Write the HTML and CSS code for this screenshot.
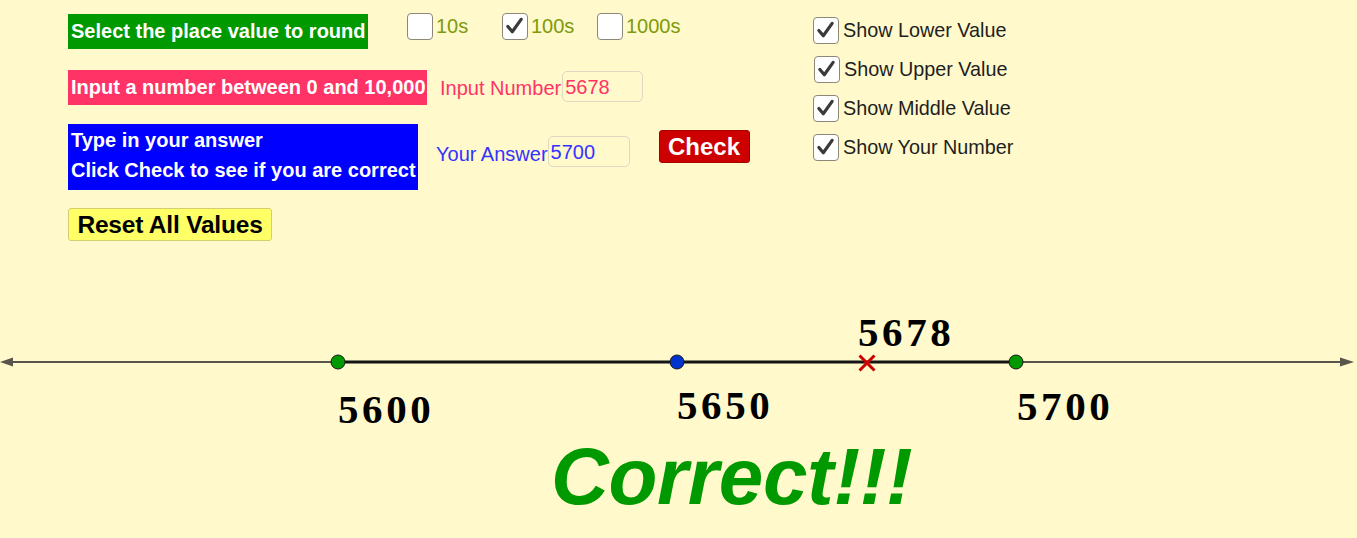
FILE: index.html
```html
<!DOCTYPE html>
<html>
<head>
<meta charset="utf-8">
<link rel="stylesheet" href="styles.css">
</head>
<body>
<div class="app">
  <div class="controls">
    <div class="left">
      <div class="row row1">
        <div class="tag tag-green">Select the place value to round</div>
        <div class="places">
          <div class="place"><span class="cb"></span><span class="place-label">10s</span></div>
          <div class="place"><span class="cb"><svg viewBox="0 0 26 26"><path d="M5.5 13.5 L10.5 19.5 L20.5 5.5" /></svg></span><span class="place-label">100s</span></div>
          <div class="place"><span class="cb"></span><span class="place-label">1000s</span></div>
        </div>
      </div>
      <div class="row row2">
        <div class="tag tag-pink">Input a number between 0 and 10,000</div>
        <span class="field-label pink">Input Number</span>
        <div class="field pink field-number">5678</div>
      </div>
      <div class="row row3">
        <div class="tag tag-blue">Type in your answer<br>Click Check to see if you are correct</div>
        <span class="field-label blue">Your Answer</span>
        <div class="field blue field-answer">5700</div>
        <button class="btn btn-check">Check</button>
      </div>
      <div class="row row4">
        <button class="btn btn-reset">Reset All Values</button>
      </div>
    </div>
    <div class="right">
      <div class="show"><span class="cb"><svg viewBox="0 0 26 26"><path d="M5.5 13.5 L10.5 19.5 L20.5 5.5" /></svg></span><span class="show-label">Show Lower Value</span></div>
      <div class="show shift"><span class="cb"><svg viewBox="0 0 26 26"><path d="M5.5 13.5 L10.5 19.5 L20.5 5.5" /></svg></span><span class="show-label">Show Upper Value</span></div>
      <div class="show"><span class="cb"><svg viewBox="0 0 26 26"><path d="M5.5 13.5 L10.5 19.5 L20.5 5.5" /></svg></span><span class="show-label">Show Middle Value</span></div>
      <div class="show"><span class="cb"><svg viewBox="0 0 26 26"><path d="M5.5 13.5 L10.5 19.5 L20.5 5.5" /></svg></span><span class="show-label">Show Your Number</span></div>
    </div>
  </div>
  <svg class="numline" viewBox="0 0 1357 147" width="1357" height="147">
    <line class="axis" x1="6" y1="72" x2="1346" y2="72" />
    <polygon class="arrow" points="0,72 13,67.5 13,76.5" />
    <polygon class="arrow" points="1354,72 1340,67.5 1340,76.5" />
    <line class="seg" x1="338" y1="72" x2="1016" y2="72" />
    <circle class="pt-green" cx="338" cy="72" r="7" />
    <circle class="pt-blue" cx="677" cy="72" r="7" />
    <circle class="pt-green" cx="1016" cy="72" r="7" />
    <path class="cross" d="M859.5 65.5 L874.5 80.5 M874.5 65.5 L859.5 80.5" />
    <text class="num" x="338" y="133">5600</text>
    <text class="num" x="677" y="129">5650</text>
    <text class="num" x="1017" y="130">5700</text>
    <text class="num" x="858" y="56">5678</text>
  </svg>
  <div class="result">Correct!!!</div>
</div>
</body>
</html>
```

FILE: styles.css
```css
html, body {
  margin: 0;
  padding: 0;
  background: #fffacd;
}
.app {
  width: 1357px;
  height: 538px;
  overflow: hidden;
  background: #fff9cc;
  font-family: "Liberation Sans", Arial, sans-serif;
}
.controls {
  display: flex;
  height: 290px;
  box-sizing: border-box;
  padding: 14px 0 0 68px;
}
.left {
  width: 745px;
  display: flex;
  flex-direction: column;
}
.row {
  display: flex;
  align-items: flex-start;
}
.row2 { margin-top: 21px; }
.row3 { margin-top: 19px; }
.row4 { margin-top: 18px; }

.tag {
  color: #fff;
  font-weight: bold;
  font-size: 20px;
  box-sizing: border-box;
  padding: 0 3px;
  white-space: nowrap;
}
.tag-green {
  background: #009900;
  width: 300px;
  height: 35px;
  line-height: 35px;
}
.tag-pink {
  background: #ff3366;
  width: 359px;
  height: 35px;
  line-height: 35px;
}
.tag-blue {
  background: #0000ff;
  width: 350px;
  height: 66px;
  line-height: 30px;
  padding-top: 1px;
}

.places {
  display: flex;
  margin-left: 39px;
  margin-top: -1px;
}
.place {
  display: flex;
  align-items: center;
  width: 95px;
}
.place:last-child { width: auto; }
.place-label {
  color: #7d9b0a;
  font-size: 20px;
  margin-left: 3px;
}

.cb {
  display: inline-block;
  width: 26px;
  height: 27px;
  box-sizing: border-box;
  border: 1.5px solid #8c8878;
  border-radius: 4px;
  background: #fff;
  flex: none;
}
.cb svg {
  display: block;
  width: 23px;
  height: 24px;
}
.cb path {
  fill: none;
  stroke: #3a3a3a;
  stroke-width: 3.6;
  stroke-linecap: round;
  stroke-linejoin: round;
}

.field-label {
  font-size: 20px;
}
.pink { color: #ff3366; }
.blue { color: #3333ff; }
.row2 .field-label {
  margin-left: 13px;
  margin-top: 7px;
}
.row3 .field-label {
  margin-left: 18px;
  margin-top: 19px;
}
.field {
  box-sizing: border-box;
  height: 31px;
  border: 1.5px solid #ddd9c2;
  border-radius: 5px;
  font-size: 20px;
  line-height: 31px;
  padding-left: 2px;
}
.field-number {
  width: 81px;
  margin-top: 1px;
  margin-left: 1px;
}
.field-answer {
  width: 82px;
  margin-top: 12px;
}

.btn {
  font-family: "Liberation Sans", Arial, sans-serif;
  font-weight: bold;
  box-sizing: border-box;
  border-radius: 3px;
  padding: 0;
  cursor: pointer;
}
.btn-check {
  margin-left: 29px;
  margin-top: 6px;
  width: 91px;
  height: 33px;
  background: #cc0000;
  border: 1px solid #a40000;
  color: #fff;
  font-size: 24px;
}
.btn-reset {
  width: 204px;
  height: 33px;
  background: #ffff66;
  border: 1px solid #d4cf6e;
  color: #000;
  font-size: 24.5px;
  letter-spacing: -0.2px;
}

.right {
  padding-top: 3px;
  display: flex;
  flex-direction: column;
  gap: 13px;
}
.show {
  display: flex;
  align-items: center;
  height: 26px;
}
.show.shift { padding-left: 1px; }
.show-label {
  color: #1e1e1e;
  font-size: 19.8px;
  margin-left: 4px;
}

.numline {
  display: block;
}
.axis {
  stroke: #58564c;
  stroke-width: 2.2;
}
.arrow {
  fill: #58564c;
}
.seg {
  stroke: #141414;
  stroke-width: 3;
}
.pt-green {
  fill: #009900;
  stroke: #1a1a1a;
  stroke-width: 1;
}
.pt-blue {
  fill: #0033cc;
  stroke: #1a1a1a;
  stroke-width: 1;
}
.cross {
  stroke: #cc0000;
  stroke-width: 3;
  fill: none;
}
.num {
  font-family: "Liberation Serif", "Times New Roman", serif;
  font-weight: bold;
  font-size: 41px;
  letter-spacing: 3.6px;
  fill: #000;
}

.result {
  padding-left: 551px;
  font-size: 80px;
  line-height: 80px;
  font-weight: bold;
  font-style: italic;
  color: #009900;
  letter-spacing: -0.3px;
}
```
